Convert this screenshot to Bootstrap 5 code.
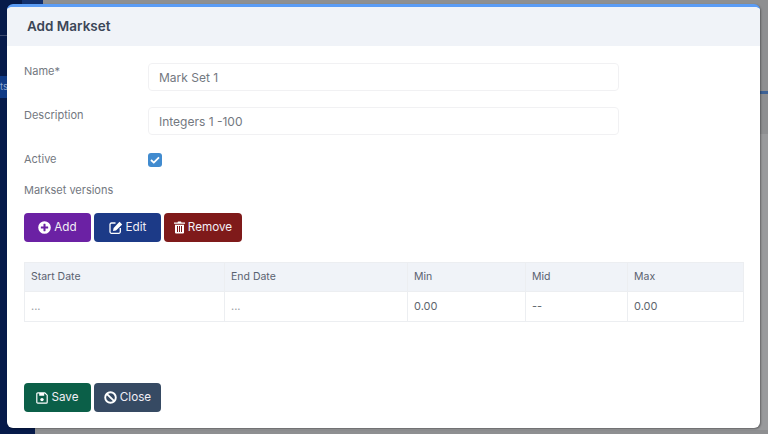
<!DOCTYPE html>
<html lang="en"><head><meta charset="utf-8"><title>Add Markset</title>
<link href="https://cdn.jsdelivr.net/npm/bootstrap@5.3.0/dist/css/bootstrap.min.css" rel="stylesheet">
<style>
html,body{height:434px;overflow:hidden}
body{font-family:Inter,"Liberation Sans",sans-serif;background:#8e8f91;color:#6c757d;font-size:11px;position:relative}
.bg-wrap{height:434px}
.side-nav{width:35px;background:#061a4a;position:relative}
.side-rule{height:1px;background:#3c4a6e;margin-top:35px}
.side-nav-active{background:#103a86;color:#8ea6d0;height:22px;margin-top:40px;font-size:9.5px;line-height:22px;width:100%;overflow:hidden}
.side-tab{position:absolute;left:22px;top:0;width:21px;height:5px;background:#12306f}
.bg-main{background:#8e8f91}
.bg-line{height:3px;background:#3d6296;margin-top:91px}
.bg-pale{height:296px;margin-top:40px;background:#999a9c}
.dlg{position:absolute;left:7px;top:4px;width:753px;height:424px;background:#fff;border-top:3px solid #5b9cf5;border-radius:6px;overflow:hidden;box-shadow:1px 1px 2px rgba(0,0,0,.35)}
.dlg-head{height:39px;background:#f0f3f8;padding:0 20px;display:flex;align-items:center;font-size:13.5px;font-weight:600;color:#3b4657}
.dlg-body{padding:17px 17px 0;height:382px;display:flex;flex-direction:column}
.form-line{display:flex}
.lbl{width:124px;flex:none;font-size:11px;color:#73787f;line-height:16px}
.lbl-tight{line-height:13px}
.fld{width:471px;height:28px;border:1px solid #f1f1f3;border-radius:4px;padding:0 10px;font-size:12px;color:#73787f;line-height:26px;background:#fff;font-family:inherit}
.fld:focus{outline:0}
.chk{width:14px;height:14px;border-radius:3px;background:#418bcf;display:flex;align-items:center;justify-content:center}
.act{border:0;border-radius:4px;height:29px;color:#f1eef5;font-size:11.7px;display:inline-flex;align-items:center;justify-content:center;gap:3px;padding:0;font-family:inherit;box-shadow:0 0 0 .5px rgba(255,255,255,.3)}
.w67{width:67px}.w79{width:78px}
.c-purple{background:#6b21a4}.c-blue{background:#1c3a87}.c-red{background:#7f1a1a}.c-green{background:#0b5f48}.c-slate{background:#364a63}
.grid-tbl{width:719px;border-collapse:collapse;table-layout:fixed;font-size:10.5px;color:#60666e;margin-top:20px}
.grid-tbl th,.grid-tbl td{border:1px solid #eceef1;padding:0 6px;font-weight:400}
.grid-tbl th{background:#f0f3f8;height:29px;color:#5a6270}
.grid-tbl td{height:30px;font-size:11px}
.dots{color:#9a9ea4}
.foot-btns{margin-top:auto;margin-bottom:16px;display:flex;gap:3px}
</style></head>
<body>
<div class="d-flex bg-wrap">
  <div class="side-nav flex-shrink-0"><div class="side-rule"></div><div class="side-nav-active">ts</div></div>
  <div class="bg-main flex-grow-1"><div class="bg-line"></div><div class="bg-pale"></div></div>
</div>
<div class="side-tab"></div>
<div class="dlg" role="dialog">
  <div class="dlg-head">Add Markset</div>
  <div class="dlg-body">
    <div class="form-line" style="margin-bottom:16px"><div class="lbl">Name*</div><input class="fld" value="Mark Set 1"></div>
    <div class="form-line"><div class="lbl">Description</div><input class="fld" value="Integers 1 -100"></div>
    <div class="form-line" style="margin-top:18px"><div class="lbl lbl-tight">Active</div><div class="chk"><svg width="10" height="8" viewBox="0 0 10 8"><path d="M1 4l2.800 2.600L9 1.300" fill="none" stroke="#fff" stroke-width="1.800"/></svg></div></div>
    <div class="lbl" style="margin-top:15px;width:auto">Markset versions</div>
    <div class="d-flex" style="gap:3px;margin-top:15px">
      <button class="act c-purple w67"><svg width="13" height="13" viewBox="0 0 512 512"><path fill="#fff" d="M256 8a248 248 0 100 496 248 248 0 000-496zm144 276a12 12 0 01-12 12h-92v92a12 12 0 01-12 12h-56a12 12 0 01-12-12v-92h-92a12 12 0 01-12-12v-56a12 12 0 0112-12h92v-92a12 12 0 0112-12h56a12 12 0 0112 12v92h92a12 12 0 0112 12z"/></svg>Add</button>
      <button class="act c-blue w67"><svg width="14" height="13" viewBox="0 0 14 13"><path fill="none" stroke="#fff" stroke-width="1.300" d="M6.500 2H2.500A1.500 1.500 0 001 3.500v7.300A1.500 1.500 0 002.500 12.300h7.300a1.500 1.500 0 001.500-1.500V7"/><path fill="#fff" d="M4.600 7L10.500.800l2.700 2.700L7 9.500l-3 .5z"/></svg>Edit</button>
      <button class="act c-red w79"><svg width="11" height="13" viewBox="0 0 11 12"><path fill="#fff" fill-rule="evenodd" d="M4 0h3l.5 1H11v1.300H0V1h3.500zM1 3.200h9V11a1 1 0 01-1 1H2a1 1 0 01-1-1zm2 1.300v6h1v-6zm2 0v6h1v-6zm2 0v6h1v-6z"/></svg>Remove</button>
    </div>
    <table class="grid-tbl">
      <colgroup><col style="width:200px"><col style="width:183px"><col style="width:118px"><col style="width:102px"><col style="width:116px"></colgroup>
      <thead><tr><th>Start Date</th><th>End Date</th><th>Min</th><th>Mid</th><th>Max</th></tr></thead>
      <tbody><tr><td class="dots">...</td><td class="dots">...</td><td>0.00</td><td>--</td><td>0.00</td></tr></tbody>
    </table>
    <div class="foot-btns">
      <button class="act c-green w67"><svg width="12" height="12" viewBox="0 0 12 12"><path fill="none" stroke="#fff" stroke-width="1.200" d="M1.800.800h7L11.200 3.200v7a1 1 0 01-1 1H1.800a1 1 0 01-1-1v-8.400a1 1 0 011-1z"/><path fill="#fff" d="M3.200 1h5v2.700h-5z"/><circle cx="6" cy="7.600" r="1.700" fill="#fff"/></svg>Save</button>
      <button class="act c-slate w67"><svg width="13" height="13" viewBox="0 0 13 13"><circle cx="6.500" cy="6.500" r="5.300" fill="none" stroke="#fff" stroke-width="1.900"/><path d="M2.800 2.800l7.400 7.400" stroke="#fff" stroke-width="1.900"/></svg>Close</button>
    </div>
  </div>
</div>
<script src="https://cdn.jsdelivr.net/npm/bootstrap@5.3.0/dist/js/bootstrap.bundle.min.js"></script>
</body></html>
